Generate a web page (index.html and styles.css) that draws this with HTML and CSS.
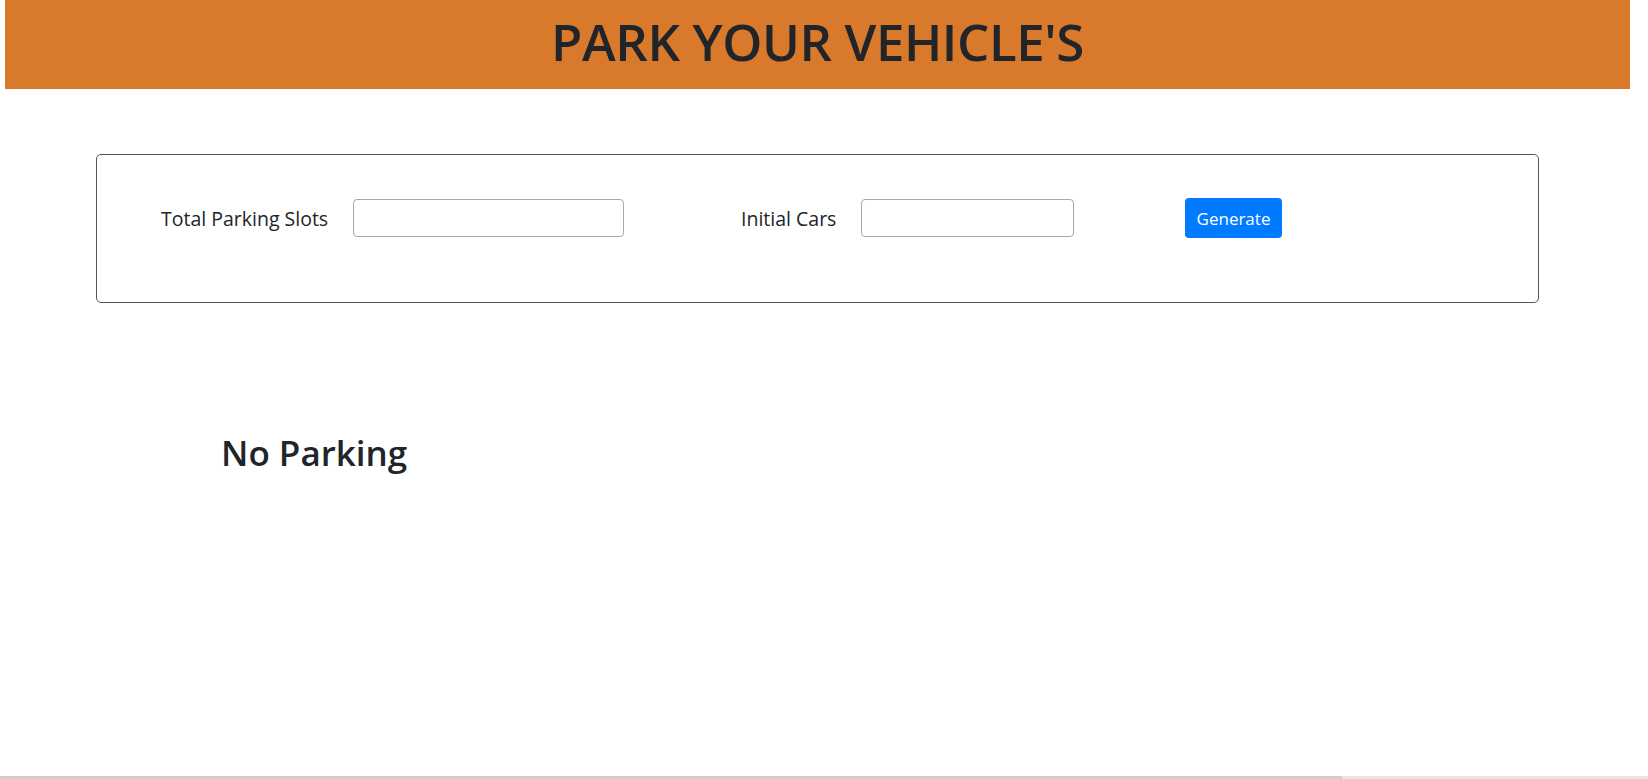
FILE: index.html
```html
<!DOCTYPE html>
<html lang="en">
<head>
    <meta charset="UTF-8">
    <meta name="viewport" content="width=device-width, initial-scale=1.0">
    <title>Park Your Vehicle</title>
    <link rel="stylesheet" href="styles.css">
</head>
<body>
    <header class="top-bar">
        <h1>PARK YOUR VEHICLE'S</h1>
    </header>
    <main class="page">
        <div class="setup-card">
            <form class="setup-form" onsubmit="return false;">
                <label for="totalSlots" class="slots-label">Total Parking Slots</label>
                <input type="text" id="totalSlots" class="slots-input">
                <label for="initialCars" class="cars-label">Initial Cars</label>
                <input type="text" id="initialCars" class="cars-input">
                <button type="submit" class="generate-btn">Generate</button>
            </form>
        </div>
        <h2 class="status">No Parking</h2>
    </main>
    <div class="scroll-track"><div class="scroll-thumb"></div></div>
</body>
</html>
```

FILE: styles.css
```css
body {
    margin: 0;
    font-family: "Open Sans", "Noto Sans", Arial, sans-serif;
    color: #212529;
    background-color: #fff;
    min-height: 100vh;
    display: flex;
    flex-direction: column;
}
.top-bar {
    background-color: #d9792c;
    height: 89px;
    box-sizing: border-box;
    padding-bottom: 8px;
    margin: 0 18px 0 5px;
    display: flex;
    justify-content: center;
    align-items: center;
}
.top-bar h1 {
    margin: 0;
    font-size: 51px;
    font-weight: 600;
    color: #212529;
    letter-spacing: -0.4px;
}
.page {
    flex: 1;
}
.setup-card {
    margin: 65px 0 0 96px;
    width: 1443px;
    box-sizing: border-box;
    border: 1px solid #555;
    border-radius: 5px;
    padding: 43px 0 64px 64px;
}
.setup-form {
    display: flex;
    align-items: center;
    height: 40px;
}
label {
    font-size: 19.5px;
    color: #212529;
}
.slots-label {
    width: 192px;
}
.cars-label {
    width: 120px;
    margin-left: 117px;
}
input[type="text"] {
    height: 38px;
    padding: 6px 12px;
    border: 1px solid #a8a8a8;
    border-radius: 4px;
    box-sizing: border-box;
    font-size: 16px;
}
.slots-input {
    width: 271px;
}
.cars-input {
    width: 213px;
}
.generate-btn {
    margin-left: 111px;
    width: 97px;
    height: 40px;
    border: none;
    border-radius: 4px;
    background-color: #007bff;
    color: #fff;
    font-family: inherit;
    font-size: 17px;
    cursor: pointer;
}
.generate-btn:hover {
    background-color: #0069d9;
}
.status {
    margin: 129px 0 0 221px;
    font-size: 35px;
    font-weight: 600;
    line-height: 1.2;
}
.scroll-track {
    height: 3px;
    background-color: #e6e6e6;
}
.scroll-thumb {
    width: 1342px;
    height: 3px;
    background-color: #cdcdcd;
}
```
